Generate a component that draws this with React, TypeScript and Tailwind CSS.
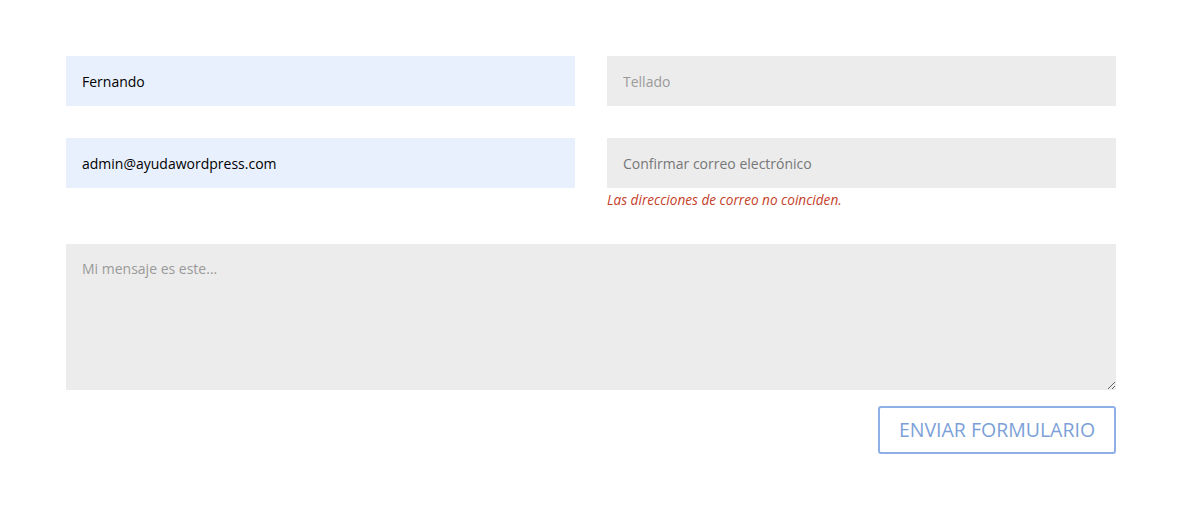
import React from "react";

const field =
  "h-[50px] w-full px-4 text-[14px] placeholder:text-[#9a9a9a] outline-none";

export default function App() {
  return (
    <div className="min-h-[508px] bg-white font-['Open_Sans',sans-serif]">
      <form className="mx-[66px] w-[1050px] pt-[56px]" onSubmit={(e) => e.preventDefault()}>
        <div className="grid grid-cols-2 gap-x-8">
          <input className={`${field} bg-[#e8f0fe] text-black`} defaultValue="Fernando" />
          <input className={`${field} bg-[#ececec] text-[#333]`} placeholder="Tellado" />
        </div>
        <div className="mt-[32px] grid grid-cols-2 gap-x-8">
          <input className={`${field} bg-[#e8f0fe] text-black`} defaultValue="admin@ayudawordpress.com" />
          <div>
            <input
              className={`${field} bg-[#ececec] text-[#333] placeholder:text-[#777]`}
              placeholder="Confirmar correo electrónico"
            />
            <p className="mt-[3px] text-[13.6px] italic leading-[18px] text-[#c5412a]">
              Las direcciones de correo no coinciden.
            </p>
          </div>
        </div>
        <textarea
          className="mt-[35px] block h-[146px] w-full bg-[#ececec] px-4 py-[14px] text-[14px] text-[#333] placeholder:text-[#9a9a9a] outline-none"
          placeholder="Mi mensaje es este..."
        />
        <div className="mt-[16px] flex justify-end">
          <button
            type="submit"
            className="h-[48px] w-[238px] rounded-[3px] border-2 border-[#8fb0e6] text-[19.5px] uppercase text-[#7c9fd8]"
          >
            Enviar formulario
          </button>
        </div>
      </form>
    </div>
  );
}
